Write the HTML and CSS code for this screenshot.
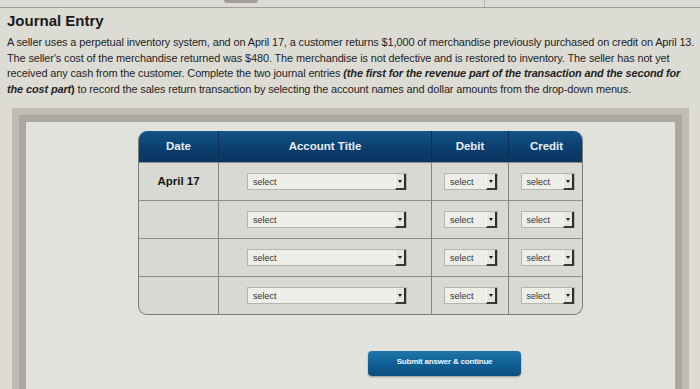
FILE: index.html
```html
<!DOCTYPE html>
<html>
<head>
<meta charset="utf-8">
<link rel="stylesheet" href="styles.css">
</head>
<body>
<div class="topbar"><span class="tab"></span><span class="vline"></span></div>
<h1 class="title">Journal Entry</h1>
<p class="intro">A seller uses a perpetual inventory system, and on April 17, a customer returns $1,000 of merchandise previously purchased on credit on April 13.<br>The seller's cost of the merchandise returned was $480. The merchandise is not defective and is restored to inventory. The seller has not yet<br>received any cash from the customer. Complete the two journal entries <b><i>(the first for the revenue part of the transaction and the second for<br>the cost part</i>)</b> to record the sales return transaction by selecting the account names and dollar amounts from the drop-down menus.</p>
<div class="frame">
  <div class="inner">
    <div class="journal">
      <div class="hd">Date</div>
      <div class="hd">Account Title</div>
      <div class="hd">Debit</div>
      <div class="hd">Credit</div>

      <div class="cell date">April 17</div>
      <div class="cell acct"><div class="sel wide"><span>select</span><i class="arr"></i></div></div>
      <div class="cell"><div class="sel small"><span>select</span><i class="arr"></i></div></div>
      <div class="cell last"><div class="sel small"><span>select</span><i class="arr"></i></div></div>

      <div class="cell date"></div>
      <div class="cell acct"><div class="sel wide"><span>select</span><i class="arr"></i></div></div>
      <div class="cell"><div class="sel small"><span>select</span><i class="arr"></i></div></div>
      <div class="cell last"><div class="sel small"><span>select</span><i class="arr"></i></div></div>

      <div class="cell date"></div>
      <div class="cell acct"><div class="sel wide"><span>select</span><i class="arr"></i></div></div>
      <div class="cell"><div class="sel small"><span>select</span><i class="arr"></i></div></div>
      <div class="cell last"><div class="sel small"><span>select</span><i class="arr"></i></div></div>

      <div class="cell date"></div>
      <div class="cell acct"><div class="sel wide"><span>select</span><i class="arr"></i></div></div>
      <div class="cell"><div class="sel small"><span>select</span><i class="arr"></i></div></div>
      <div class="cell last"><div class="sel small"><span>select</span><i class="arr"></i></div></div>
    </div>
    <div class="actions"><button class="submit">Submit answer &amp; continue</button></div>
  </div>
</div>
</body>
</html>
```
FILE: styles.css
```css
html, body { margin: 0; padding: 0; }
body {
  width: 700px;
  height: 389px;
  overflow: hidden;
  background: #dcdcd5;
  font-family: "Liberation Sans", Arial, sans-serif;
  color: #1e1e1e;
}
.topbar {
  height: 7px;
  border-bottom: 1px solid #9e9c98;
  display: flex;
}
.tab {
  margin-left: 224px;
  width: 34px;
  height: 3px;
  background: #a59e98;
  border-radius: 0 0 3px 3px;
}
.vline {
  margin-left: 226px;
  width: 1px;
  height: 7px;
  background: #b8b6b0;
}
.title {
  margin: 3px 0 0 7px;
  font-size: 15px;
  font-weight: bold;
  line-height: 19px;
  color: #1a1a1a;
}
.intro {
  margin: 5px 0 0 7px;
  width: 693px;
  font-size: 10.95px;
  line-height: 15.5px;
  color: #1e1e1e;
  white-space: nowrap;
  letter-spacing: -0.12px;
}
.intro b { color: #222; }
.frame {
  margin: 11px 0 0 12px;
  width: 677px;
  height: 300px;
  box-sizing: border-box;
  border: 7px solid #c0bbb4;
  box-shadow: inset 0 0 0 7px #aca7a0;
  padding: 7px;
}
.inner {
  background: #e2e2dc;
  height: 100%;
  padding: 9px 0 0 112px;
  box-sizing: border-box;
}
.journal {
  display: grid;
  grid-template-columns: 80px 213px 77px 75px;
  grid-template-rows: 31px 38px 38px 38px 38px;
  width: 445px;
  border-radius: 9px;
  overflow: hidden;
  border: 1px solid #7c7c78;
  border-top: none;
  box-sizing: border-box;
  background: #d9d9d3;
}
.hd {
  background: linear-gradient(#135488, #0a3d6c 60%, #0a3763);
  color: #e8eef4;
  font-weight: bold;
  font-size: 11.5px;
  display: flex;
  align-items: center;
  justify-content: center;
  border-right: 1px solid #0b2e52;
  padding-bottom: 1px;
}
.journal .hd:nth-child(4) { border-right: none; }
.cell {
  border-right: 1px solid #85857f;
  border-top: 1px solid #8e8e89;
  display: flex;
  align-items: center;
  justify-content: center;
}
.cell.last { border-right: none; }
.date {
  font-weight: bold;
  font-size: 11.5px;
  color: #161616;
  padding-bottom: 2px;
}
.acct { justify-content: flex-start; padding-left: 28px; }
.sel {
  height: 17px;
  background: #eeeee8;
  border: 1px solid #b5b5b0;
  display: flex;
  align-items: center;
  justify-content: space-between;
  font-size: 9px;
  color: #333;
  box-sizing: border-box;
}
.sel span { padding-left: 5px; }
.wide { width: 160px; }
.small { width: 54px; margin-left: 2px; }
.arr {
  width: 11px;
  height: 16px;
  box-sizing: border-box;
  border-left: 1px solid #f8f8f4;
  border-right: 2px solid #2e2e2e;
  border-bottom: 2px solid #3a3a3a;
  background: #e6e6e0;
  display: flex;
  align-items: center;
  justify-content: center;
  margin-top: 1px;
}
.arr::after {
  content: "";
  border-left: 2px solid transparent;
  border-right: 2px solid transparent;
  border-top: 3px solid #1a1a1a;
}
.actions {
  padding: 35px 0 0 230px;
}
.submit {
  width: 153px;
  height: 25px;
  border: none;
  border-radius: 4px;
  background: linear-gradient(#2077aa, #0f5d92 55%, #0c4f80);
  color: #f2f6fa;
  font-family: "Liberation Sans", Arial, sans-serif;
  font-weight: bold;
  font-size: 8px;
  letter-spacing: -0.2px;
  box-shadow: 0 1px 2px rgba(0,0,0,0.35);
  padding: 0 0 4px 0;
}
```
